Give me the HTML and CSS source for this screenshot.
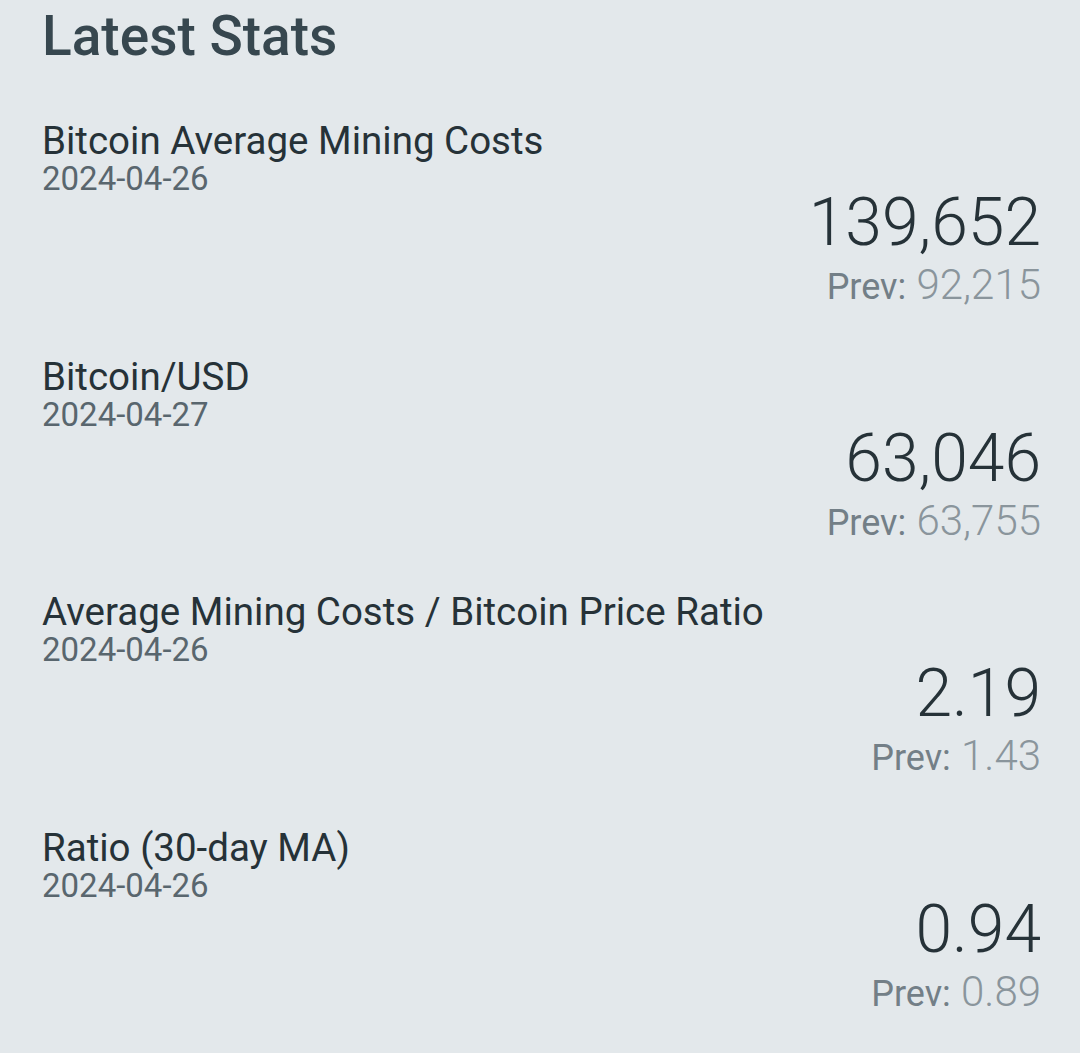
FILE: index.html
```html
<!DOCTYPE html>
<html lang="en">
<head>
    <meta charset="UTF-8">
    <meta name="viewport" content="width=device-width, initial-scale=1.0">
    <title>Latest Stats</title>
    <link rel="stylesheet" href="styles.css">
</head>
<body>

    <h1 class="page-title">Latest Stats</h1>

    <div class="stats-list">
        <div class="stat">
            <div class="stat-name">Bitcoin Average Mining Costs</div>
            <div class="stat-date">2024-04-26</div>
            <div class="stat-value">139,652</div>
            <div class="stat-prev"><span class="prev-label">Prev:</span> 92,215</div>
        </div>

        <div class="stat">
            <div class="stat-name">Bitcoin/USD</div>
            <div class="stat-date">2024-04-27</div>
            <div class="stat-value">63,046</div>
            <div class="stat-prev"><span class="prev-label">Prev:</span> 63,755</div>
        </div>

        <div class="stat">
            <div class="stat-name">Average Mining Costs / Bitcoin Price Ratio</div>
            <div class="stat-date">2024-04-26</div>
            <div class="stat-value">2.19</div>
            <div class="stat-prev"><span class="prev-label">Prev:</span> 1.43</div>
        </div>

        <div class="stat">
            <div class="stat-name">Ratio (30-day MA)</div>
            <div class="stat-date">2024-04-26</div>
            <div class="stat-value">0.94</div>
            <div class="stat-prev"><span class="prev-label">Prev:</span> 0.89</div>
        </div>
    </div>

</body>
</html>
```

FILE: styles.css
```css
/* Reset */
* {
    margin: 0;
    padding: 0;
    box-sizing: border-box;
    font-family: Roboto, "Liberation Sans", sans-serif;
}

body {
    background-color: #e3e8eb;
    padding: 4px 39px 0 42px;
    height: 100vh;
}

.page-title {
    font-size: 55px;
    font-weight: 500;
    line-height: 64px;
    color: #37474f;
}

.stats-list {
    display: flex;
    flex-direction: column;
    gap: 47.5px;
    margin-top: 53px;
}

.stat-name {
    font-size: 38.5px;
    line-height: 40px;
    color: #263238;
}

.stat-date {
    font-size: 33px;
    line-height: 35px;
    color: #59666e;
}

.stat-value {
    text-align: right;
    font-size: 66px;
    font-weight: 300;
    line-height: 53px;
    color: #263238;
}

.stat-prev {
    margin-top: 12px;
    text-align: right;
    font-size: 42px;
    font-weight: 300;
    line-height: 48px;
    color: #8a959c;
}

.prev-label {
    font-size: 36px;
    font-weight: 400;
    line-height: 1;
    color: #737f87;
}
```
